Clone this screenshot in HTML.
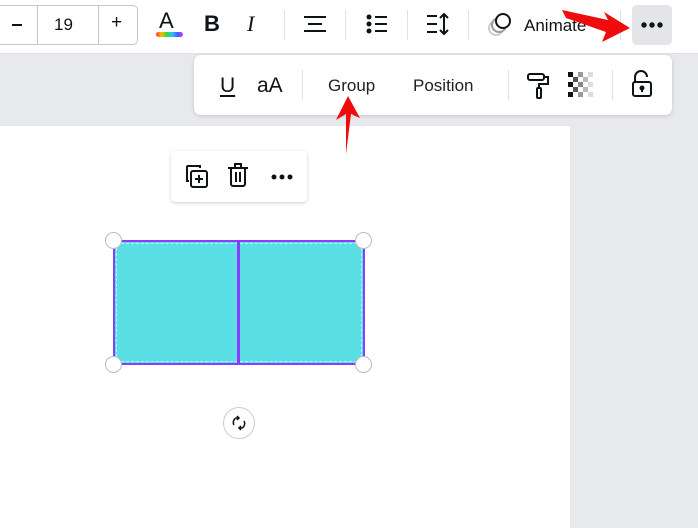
<!DOCTYPE html>
<html><head><style>
*{margin:0;padding:0;box-sizing:border-box}
body{width:698px;height:528px;overflow:hidden;background:#e8e9ed;font-family:"Liberation Sans",sans-serif;position:relative;color:#0e1318}
.a{position:absolute}
</style></head><body>
<div class="a" style="left:0;top:0;width:698px;height:54px;background:#fff;border-bottom:1px solid #dfe1e5"></div>
<div class="a" style="left:-6px;top:5px;width:144px;height:40px;border:1px solid #c4c8ce;border-radius:5px"></div>
<div class="a" style="left:37px;top:5px;width:1px;height:40px;background:#c4c8ce"></div>
<div class="a" style="left:98px;top:5px;width:1px;height:40px;background:#c4c8ce"></div>
<div class="a" style="left:12px;top:24px;width:10px;height:2px;background:#0e1318"></div>
<div class="a" style="left:54px;top:15px;font-size:17px">19</div>
<div class="a" style="left:111px;top:12px;font-size:19px">+</div>
<div class="a" style="left:159px;top:8px;font-size:22px">A</div>
<div class="a" style="left:156px;top:32px;width:27px;height:5px;border-radius:3px;background:linear-gradient(90deg,#f33,#fb0,#3d3,#3bf,#36f,#c3f)"></div>
<div class="a" style="left:204px;top:11px;font-size:22px;font-weight:bold">B</div>
<div class="a" style="left:247px;top:11px;font-size:22px;font-style:italic;font-family:'Liberation Serif',serif">I</div>
<div class="a" style="left:284px;top:10px;width:1px;height:30px;background:#dfe1e5"></div>
<svg class="a" style="left:303px;top:14px" width="24" height="20" stroke="#0e1318" stroke-width="2"><path d="M1 3h22M5 10h14M1 17h22"/></svg>
<div class="a" style="left:345px;top:10px;width:1px;height:30px;background:#dfe1e5"></div>
<svg class="a" style="left:366px;top:14px" width="22" height="20"><g fill="#0e1318"><circle cx="3" cy="3" r="2.5"/><circle cx="3" cy="10" r="2.5"/><circle cx="3" cy="17" r="2.5"/></g><path d="M9 3h12M9 10h12M9 17h12" stroke="#0e1318" stroke-width="2"/></svg>
<div class="a" style="left:407px;top:10px;width:1px;height:30px;background:#dfe1e5"></div>
<svg class="a" style="left:426px;top:13px" width="24" height="22" stroke="#0e1318" stroke-width="2" fill="none"><path d="M1 3h10M1 11h10M1 19h10M18 1v20M14 5l4-4 4 4M14 17l4 4 4-4"/></svg>
<div class="a" style="left:468px;top:10px;width:1px;height:30px;background:#dfe1e5"></div>
<svg class="a" style="left:486px;top:12px" width="30" height="26" fill="none" stroke-width="2"><circle cx="10" cy="16" r="7" stroke="#ccc"/><circle cx="13" cy="13" r="7" stroke="#999" fill="#fff"/><circle cx="17" cy="9" r="7" stroke="#0e1318" fill="#fff"/></svg>
<div class="a" style="left:524px;top:16px;font-size:17px">Animate</div>
<div class="a" style="left:620px;top:10px;width:1px;height:30px;background:#dfe1e5"></div>
<div class="a" style="left:632px;top:5px;width:40px;height:40px;border-radius:5px;background:#e3e5e8"></div>
<svg class="a" style="left:640px;top:21px" width="24" height="8" fill="#0e1318"><circle cx="4" cy="4" r="2.7"/><circle cx="12" cy="4" r="2.7"/><circle cx="20" cy="4" r="2.7"/></svg>
<svg class="a" style="left:560px;top:4px" width="72" height="40"><path d="M2 6 L48 16 L44 8 L70 24 L42 38 L46 28 L6 14 Z" fill="#ee0c0c"/></svg>
<div class="a" style="left:0;top:126px;width:570px;height:402px;background:#fff"></div>
<div class="a" style="left:194px;top:55px;width:478px;height:60px;background:#fff;border-radius:7px;box-shadow:0 1px 4px rgba(0,0,0,.15)"></div>
<div class="a" style="left:220px;top:74px;font-size:21px;text-decoration:underline;text-underline-offset:3px">U</div>
<div class="a" style="left:257px;top:74px;font-size:21px">aA</div>
<div class="a" style="left:302px;top:70px;width:1px;height:30px;background:#dfe1e5"></div>
<div class="a" style="left:328px;top:76px;font-size:17px;color:#222">Group</div>
<div class="a" style="left:413px;top:76px;font-size:17px;color:#222">Position</div>
<div class="a" style="left:508px;top:70px;width:1px;height:30px;background:#dfe1e5"></div>
<svg class="a" style="left:527px;top:72px" width="24" height="28" fill="none" stroke="#0e1318" stroke-width="2"><rect x="1" y="2" width="16" height="6" rx="2"/><path d="M17 5h4v7h-9v4"/><rect x="10" y="16" width="4" height="10" rx="1"/></svg>
<svg class="a" style="left:568px;top:72px" width="26" height="26"><g fill="#111"><rect x="0" y="0" width="5" height="5"/><rect x="0" y="10" width="5" height="5"/><rect x="0" y="20" width="5" height="5"/><rect x="5" y="15" width="5" height="5" fill="#555"/><rect x="5" y="5" width="5" height="5" fill="#555"/><rect x="10" y="10" width="5" height="5" fill="#888"/><rect x="10" y="0" width="5" height="5" fill="#999"/><rect x="10" y="20" width="5" height="5" fill="#999"/><rect x="15" y="5" width="5" height="5" fill="#bbb"/><rect x="15" y="15" width="5" height="5" fill="#bbb"/><rect x="20" y="0" width="5" height="5" fill="#ddd"/><rect x="20" y="10" width="5" height="5" fill="#ddd"/><rect x="20" y="20" width="5" height="5" fill="#ddd"/></g></svg>
<div class="a" style="left:612px;top:70px;width:1px;height:30px;background:#dfe1e5"></div>
<svg class="a" style="left:631px;top:70px" width="22" height="28" fill="none" stroke="#0e1318" stroke-width="2"><path d="M4 12V7a6 6 0 0 1 12 0"/><rect x="2" y="12" width="18" height="14" rx="2"/><circle cx="11" cy="18" r="1.5" fill="#0e1318"/><path d="M11 19v3"/></svg>
<svg class="a" style="left:334px;top:94px" width="28" height="62"><path d="M14 2 L26 24 L17 20 L12 60 L12 20 L2 26 Z" fill="#ee0c0c"/></svg>
<div class="a" style="left:171px;top:151px;width:136px;height:51px;background:#fff;border-radius:4px;box-shadow:0 1px 3px rgba(0,0,0,.2)"></div>
<svg class="a" style="left:185px;top:164px" width="24" height="26" fill="none" stroke="#0e1318" stroke-width="2"><path d="M4 17H2V3a1 1 0 0 1 1-1h12v2"/><rect x="6" y="7" width="16" height="16" rx="2"/><path d="M14 11v8M10 15h8"/></svg>
<svg class="a" style="left:227px;top:162px" width="22" height="26" fill="none" stroke="#0e1318" stroke-width="2"><path d="M1 6h20M8 6V2h6v4M4 6v16a2 2 0 0 0 2 2h10a2 2 0 0 0 2-2V6M9 10v10M13 10v10"/></svg>
<svg class="a" style="left:270px;top:173px" width="24" height="8" fill="#0e1318"><circle cx="4" cy="4" r="2.5"/><circle cx="12" cy="4" r="2.5"/><circle cx="20" cy="4" r="2.5"/></svg>
<div class="a" style="left:113px;top:240px;width:252px;height:125px;background:#5adfe4;border:2px solid #8b3dff"></div>
<div class="a" style="left:116px;top:243px;width:246px;height:119px;border:1px dashed rgba(255,255,255,.6)"></div>
<div class="a" style="left:237px;top:240px;width:3px;height:125px;background:#8b3dff"></div>
<div class="a" style="left:105px;top:232px;width:17px;height:17px;border-radius:50%;background:#fff;border:1px solid #bbb"></div>
<div class="a" style="left:355px;top:232px;width:17px;height:17px;border-radius:50%;background:#fff;border:1px solid #bbb"></div>
<div class="a" style="left:105px;top:356px;width:17px;height:17px;border-radius:50%;background:#fff;border:1px solid #bbb"></div>
<div class="a" style="left:355px;top:356px;width:17px;height:17px;border-radius:50%;background:#fff;border:1px solid #bbb"></div>
<div class="a" style="left:223px;top:407px;width:32px;height:32px;border-radius:50%;background:#fff;border:1px solid #ccc"></div>
<svg class="a" style="left:231px;top:415px" width="16" height="16" fill="none" stroke="#0e1318" stroke-width="1.5"><path d="M3 10a5 5 0 0 1 2-7h3M6 1l2 2-2 2M13 6a5 5 0 0 1-2 7H8M10 15l-2-2 2-2"/></svg>
</body></html>
